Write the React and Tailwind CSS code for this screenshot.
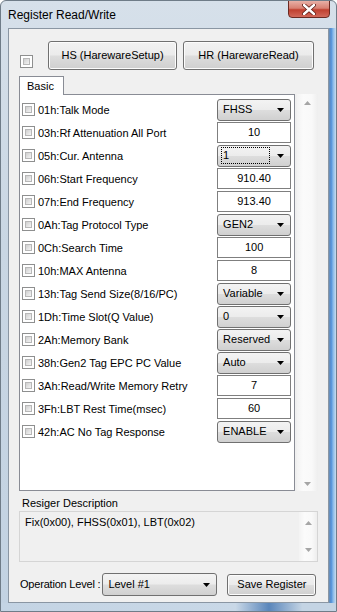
import React from 'react';

const rows = [
  { label: '01h:Talk Mode', type: 'combo', value: 'FHSS' },
  { label: '03h:Rf Attenuation All Port', type: 'text', value: '10' },
  { label: '05h:Cur. Antenna', type: 'combo', value: '1', focus: true },
  { label: '06h:Start Frequency', type: 'text', value: '910.40' },
  { label: '07h:End Frequency', type: 'text', value: '913.40' },
  { label: '0Ah:Tag Protocol Type', type: 'combo', value: 'GEN2' },
  { label: '0Ch:Search Time', type: 'text', value: '100' },
  { label: '10h:MAX Antenna', type: 'text', value: '8' },
  { label: '13h:Tag Send Size(8/16/PC)', type: 'combo', value: 'Variable' },
  { label: '1Dh:Time Slot(Q Value)', type: 'combo', value: '0' },
  { label: '2Ah:Memory Bank', type: 'combo', value: 'Reserved' },
  { label: '38h:Gen2 Tag EPC PC Value', type: 'combo', value: 'Auto' },
  { label: '3Ah:Read/Write Memory Retry', type: 'text', value: '7' },
  { label: '3Fh:LBT Rest Time(msec)', type: 'text', value: '60' },
  { label: '42h:AC No Tag Response', type: 'combo', value: 'ENABLE' },
];

const Check = () => (
  <span className="w-[13px] h-[13px] shrink-0 border border-[#8e8f8f] bg-white p-[2px] flex">
    <span className="flex-1 border border-[#b8b8b8] bg-[linear-gradient(135deg,#cfcfcf,#f4f4f4)]" />
  </span>
);

const Arrow = ({ color = '#000', up = false }) => (
  <svg width="7" height="4" viewBox="0 0 7 4">
    <path d={up ? 'M0 4 L3.5 0 L7 4 Z' : 'M0 0 L7 0 L3.5 4 Z'} fill={color} />
  </svg>
);

const Combo = ({ value, focus, className = 'w-[74px] h-[22px]' }) => (
  <div
    className={`${className} shrink-0 rounded-[3px] border border-[#707070] bg-[linear-gradient(to_bottom,#f3f3f3_0%,#ececec_48%,#dddddd_52%,#d0d0d0_100%)] flex items-center justify-between pl-[3px] pr-[6px]`}
  >
    <span
      className={`leading-[15px] px-[1px] ${focus ? 'border border-dotted border-black min-w-[49px]' : 'border border-transparent'}`}
    >
      {value}
    </span>
    <Arrow />
  </div>
);

const TextBox = ({ value }) => (
  <div className="w-[74px] h-[21px] border border-[#7f7f7f] bg-white flex justify-center pt-[2px] leading-[14px]">
    {value}
  </div>
);

const Button = ({ children, className }) => (
  <div
    className={`${className} shrink-0 rounded-[3px] border border-[#707070] bg-[linear-gradient(to_bottom,#f2f2f2_0%,#ebebeb_48%,#dddddd_52%,#cfcfcf_100%)] flex items-center justify-center shadow-[inset_0_0_0_1px_#fcfcfc]`}
  >
    {children}
  </div>
);

const ScrollTrack = ({ className }) => (
  <div className={`${className} flex flex-col items-center justify-between bg-[linear-gradient(to_right,#f3f3f3,#fbfbfb_30%,#f9f9f9_70%,#eeeeee)]`}>
    <Arrow color="#a6a6a6" up />
    <Arrow color="#a6a6a6" />
  </div>
);

export default function App() {
  return (
    <div className="w-[337px] h-[612px] flex flex-col bg-[linear-gradient(to_bottom,#d6e0ea,#c9d6e3_40%,#c2d2e2)] rounded-t-[6px] border border-[#6f7c88] text-[11px] text-black font-['Liberation_Sans',Arial,sans-serif] overflow-hidden">
      <div className="h-[27px] shrink-0 flex items-start justify-between pl-[7px] pr-[6px]">
        <span className="text-[12px] mt-[6px] leading-[16px]">Register Read/Write</span>
        <div className="w-[42px] h-[18px] mt-[-1px] rounded-b-[4px] border border-[#6b2a22] bg-[linear-gradient(to_bottom,#e8b0a6_0%,#d88072_45%,#c0402f_55%,#d2685a_100%)] flex items-center justify-center">
          <svg width="14" height="11" viewBox="0 0 14 11">
            <path d="M2 1 L12 10 M12 1 L2 10" stroke="#5a1a12" strokeWidth="4" strokeLinecap="round" />
            <path d="M2 1 L12 10 M12 1 L2 10" stroke="#ffffff" strokeWidth="2.4" strokeLinecap="round" />
          </svg>
        </div>
      </div>
      <div className="flex flex-1">
        <div className="w-[7px] shrink-0" />
        <div className="w-[321px] shrink-0 border border-[#8a96a3] bg-[#f0f0f0] flex flex-col pt-[12px] pl-[10px] pr-[10px]">
          <div className="flex items-start h-[29px]">
            <div className="mt-[14px] ml-[1px]">
              <Check />
            </div>
            <Button className="w-[129px] h-[29px] ml-[15px]">HS (HarewareSetup)</Button>
            <Button className="w-[131px] h-[29px] ml-[6px]">HR (HarewareRead)</Button>
          </div>
          <div className="flex mt-[6px]">
            <div className="h-[19px] w-[45px] border border-b-0 border-[#898c95] bg-white pl-[7px] pt-[2px] leading-[14px] relative z-10 mb-[-1px]">
              Basic
            </div>
          </div>
          <div className="flex h-[397px]">
            <div className="w-[277px] border border-[#898c95] bg-white pt-[3px] pl-[2px] pr-[3px] flex flex-col">
              {rows.map((r) => (
                <div key={r.label} className="h-[23px] flex items-center">
                  <Check />
                  <span className="ml-[3px] flex-1 leading-[14px] whitespace-nowrap">{r.label}</span>
                  {r.type === 'combo' ? <Combo value={r.value} focus={r.focus} /> : <TextBox value={r.value} />}
                </div>
              ))}
            </div>
            <ScrollTrack className="w-[21px] ml-[2px] pt-[7px] pb-[5px]" />
          </div>
          <div className="mt-[6px] ml-[3px] leading-[13px]">Resiger Description</div>
          <div className="mt-[1px] h-[51px] border border-[#d5d5d5] flex">
            <div className="flex-1 pl-[5px] pt-[3px] leading-[14px]">Fix(0x00), FHSS(0x01), LBT(0x02)</div>
            <ScrollTrack className="w-[18px] pt-[9px] pb-[9px]" />
          </div>
          <div className="mt-[11px] flex items-center">
            <span className="ml-[1px] whitespace-nowrap shrink-0 tracking-[-0.2px]">Operation Level :</span>
            <Combo value="Level #1" className="w-[115px] h-[23px] ml-[2px]" />
            <Button className="w-[89px] h-[22px] ml-[10px]">Save Register</Button>
          </div>
        </div>
        <div className="flex-1 bg-[linear-gradient(to_right,#6e8fb3,#4f8ed8_30%,#8bbbe9_60%,#c9dbee)]" />
      </div>
      <div className="h-[8px] shrink-0 bg-[linear-gradient(to_right,#c4d4e4,#c9d8e7_70%,#5a86bb_80%,#c4d4e4_90%)]" />
    </div>
  );
}
